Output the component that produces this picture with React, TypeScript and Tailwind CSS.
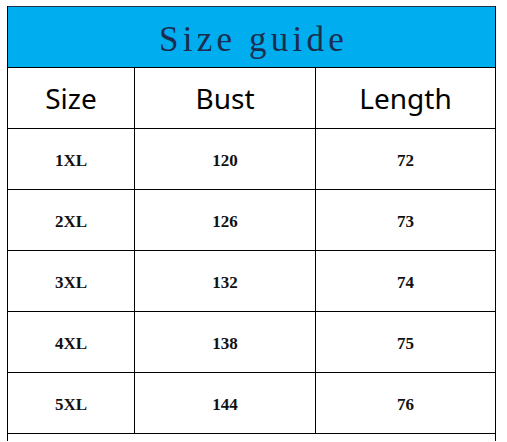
import React from 'react';

const rows = [
  { size: '1XL', bust: '120', length: '72' },
  { size: '2XL', bust: '126', length: '73' },
  { size: '3XL', bust: '132', length: '74' },
  { size: '4XL', bust: '138', length: '75' },
  { size: '5XL', bust: '144', length: '76' },
];

export default function App() {
  return (
    <div className="w-[507px] h-[442px] bg-white pl-[7px] pt-[6px] overflow-hidden">
      <div className="w-[489px] border-l-[1.5px] border-r-[1.5px] border-black">
        <div className="h-[61px] bg-[#00aeef] border-t border-[#1b3550] flex items-center justify-center">
          <span className="text-[35px] text-[#1b2d4f] font-['Liberation_Serif',serif] tracking-[0.12em] leading-none pt-1 pl-[4px]">
            Size guide
          </span>
        </div>
        <div className="grid grid-cols-[126px_181px_1fr] h-[61px] border-t-[1.5px] border-black font-['Noto_Sans',sans-serif] text-[28px] text-black">
          <div className="flex items-center justify-center">Size</div>
          <div className="flex items-center justify-center border-l-[1.5px] border-black">Bust</div>
          <div className="flex items-center justify-center border-l-[1.5px] border-black">Length</div>
        </div>
        {rows.map((r) => (
          <div
            key={r.size}
            className="grid grid-cols-[126px_181px_1fr] h-[61px] border-t-[1.5px] border-black font-['Liberation_Serif',serif] font-bold text-[17px] text-[#111]"
          >
            <div className="flex items-center justify-center pt-1">{r.size}</div>
            <div className="flex items-center justify-center pt-1 border-l-[1.5px] border-black">{r.bust}</div>
            <div className="flex items-center justify-center pt-1 border-l-[1.5px] border-black">{r.length}</div>
          </div>
        ))}
        <div className="h-[8px] border-t-[1.5px] border-black" />
      </div>
    </div>
  );
}
